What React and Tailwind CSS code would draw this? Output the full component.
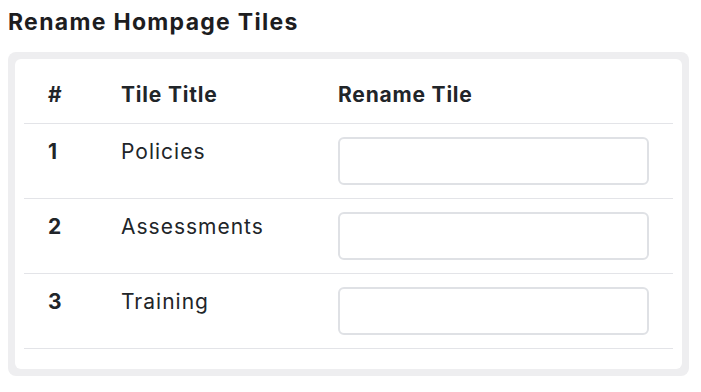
export default function App() {
  const tiles = [
    { id: 1, title: 'Policies' },
    { id: 2, title: 'Assessments' },
    { id: 3, title: 'Training' },
  ]

  return (
    <div className="min-h-screen bg-white px-2 pt-2 text-[#212529]" style={{ fontFamily: 'Inter, "Noto Sans", sans-serif' }}>
      <h1 className="text-[23px] font-bold leading-[29px] tracking-[1.3px] text-[#1d1d1f]">Rename Hompage Tiles</h1>

      <div className="mt-[15px] w-[681px] rounded-lg bg-[#eeeef0] p-[7px]">
        <div className="rounded-md bg-white px-[9px] pt-2 pb-5">
          <table className="w-full border-collapse text-left">
            <colgroup>
              <col className="w-[73px]" />
              <col className="w-[217px]" />
              <col />
            </colgroup>
            <thead>
              <tr className="border-b border-[#e3e4e8]">
                <th className="px-6 py-4 text-[21px] font-bold leading-6 tracking-[0.8px]">#</th>
                <th className="px-6 py-4 text-[21px] font-bold leading-6 tracking-[0.8px]">Tile Title</th>
                <th className="px-6 py-4 text-[21px] font-bold leading-6 tracking-[0.8px]">Rename Tile</th>
              </tr>
            </thead>
            <tbody>
              {tiles.map((t) => (
                <tr key={t.id} className="border-b border-[#e3e4e8]">
                  <td className="px-6 py-[13px] align-top text-[21px] font-bold leading-[29px]">{t.id}</td>
                  <td className="px-6 py-[13px] align-top text-[21px] leading-[29px] tracking-[1px]">{t.title}</td>
                  <td className="px-6 py-[13px] align-top">
                    <input
                      type="text"
                      className="block h-12 w-full rounded-md border-2 border-[#dfe1e5] bg-white px-3 outline-none"
                    />
                  </td>
                </tr>
              ))}
            </tbody>
          </table>
        </div>
      </div>
    </div>
  )
}
